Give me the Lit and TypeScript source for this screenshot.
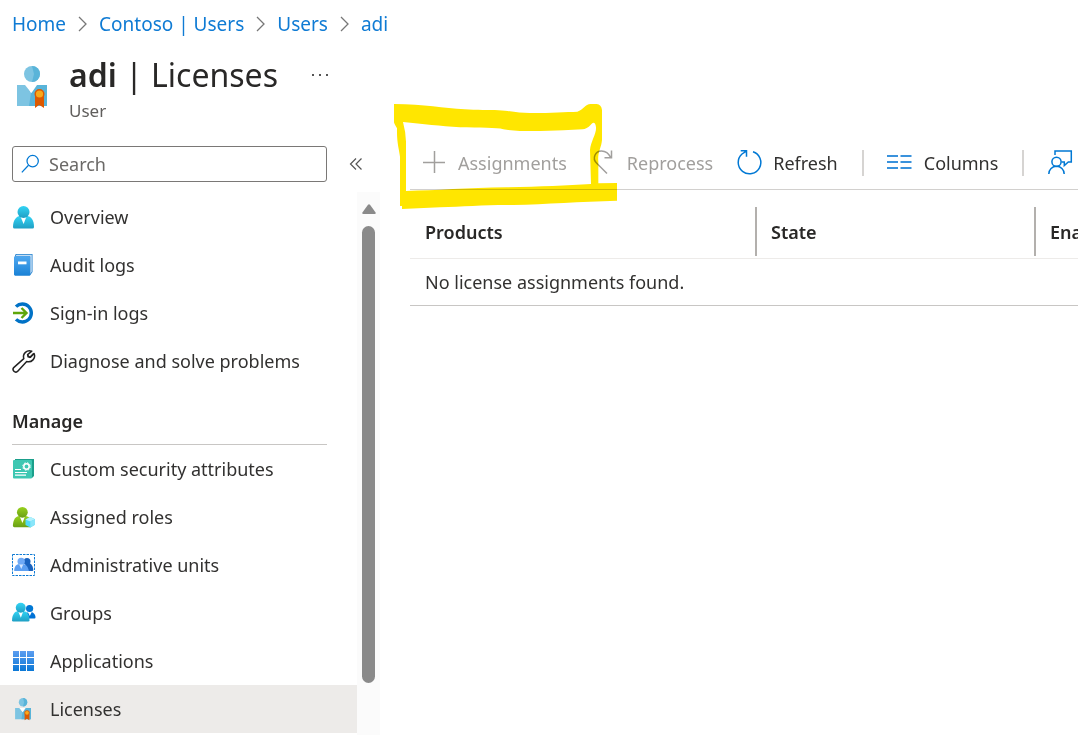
import { LitElement, html, svg, css, nothing, type TemplateResult } from "lit";
import { customElement, property } from "lit/decorators.js";
import { classMap } from "lit/directives/class-map.js";

const licenseBody = svg`
  <path d="M3 18h10l4 8 4-8h12v21H3z" fill="#7dc4e2"/>
  <path d="M17 26l4-8h12v21H15z" fill="#59b4d9"/>
  <path d="M11 18h12l-5.500 8z" fill="#fff"/>
  <circle cx="18" cy="7" r="8" fill="#7dc4e2"/>
  <path d="M18-1a8 8 0 0 1 0 16l2-8z" fill="#59b4d9"/>
  <path d="M21 29h9v12l-3-2-2-1-4 3z" fill="#dd5900"/>
  <circle cx="25.500" cy="27" r="5" fill="#dd5900"/>
  <circle cx="25.500" cy="27" r="3.600" fill="#f8a91b"/>`;

const person = (fill: string, shirt = "#fff") => svg`
  <path d="M1 22c0-7 3.500-11 7-11h7c4 0 7 4 7 11a1.500 1.500 0 0 1-1.500 1.500h-18A1.500 1.500 0 0 1 1 22z" fill=${fill}/>
  <path d="M8.500 11.500h6L11.600 19z" fill=${shirt}/>
  <circle cx="11.500" cy="7" r="6" fill=${fill}/>`;

const icons: Record<string, TemplateResult> = {
  overview: svg`
    <defs><linearGradient id="cyan" x1="0" y1="0" x2="0" y2="1"><stop offset="0" stop-color="#32d4f5"/><stop offset="1" stop-color="#1f9fc4"/></linearGradient></defs>
    ${person("url(#cyan)")}`,
  audit: svg`
    <defs><linearGradient id="book" x1="0" y1="0" x2="0" y2="1"><stop offset="0" stop-color="#50a8f0"/><stop offset="1" stop-color="#1a82d6"/></linearGradient></defs>
    <path d="M4 1h16.500v18L18 22.500H3V2z" fill="#1f7fcd"/>
    <path d="M4.500 1.800h15.300v17L18.200 21V3.200H3.200z" fill="#c5def4"/>
    <rect x="2" y="3.200" width="16.200" height="19.300" rx="1" fill="url(#book)"/>
    <rect x="6" y="8.500" width="8.500" height="2.800" fill="#fff"/>`,
  signin: svg`
    <path d="M4 5.600A9 9 0 1 1 4 18.400" fill="none" stroke="#0072c6" stroke-width="3.400"/>
    <path d="M1 12h13M9.500 7l5 5-5 5" fill="none" stroke="#5ea60a" stroke-width="2.400"/>`,
  wrench: svg`
    <path d="M19.800 2.200a6 6 0 0 0-8 7.400L1.700 18.600a2.700 2.700 0 0 0 3.800 3.800L14.700 12.500a6 6 0 0 0 7.400-8l-3.600 3.700-2.400-.4-.5-2.200z" fill="none" stroke="#222" stroke-width="1.500" stroke-linejoin="round"/>
    <path d="M16 6.500l1.600 1.900 4-4" fill="none" stroke="#222" stroke-width="1.300"/>`,
  attributes: svg`
    <path d="M3 2h19v17l-2 2H3z" fill="#1b9f8b"/>
    <rect x="1" y="3" width="19" height="18.500" rx="1" fill="#3ec7b2"/>
    <path d="M3 12.500h6M3 15.500h12M3 18.200h11" stroke="#fff" stroke-width="1.200"/>
    <circle cx="14.500" cy="9.500" r="2.700" fill="none" stroke="#fff" stroke-width="1.500"/>
    <circle cx="14.500" cy="9.500" r="3.800" fill="none" stroke="#fff" stroke-width="1" stroke-dasharray="1.500 1.500"/>`,
  roles: svg`
    <defs><linearGradient id="green" x1="0" y1="0" x2="0" y2="1"><stop offset="0" stop-color="#98d21d"/><stop offset="1" stop-color="#6a9f14"/></linearGradient></defs>
    <g transform="translate(0 1) scale(.9)">${person("url(#green)")}</g>
    <path d="M13.500 14.500l4.800-2.500 4.700 2.200v5.500l-4.700 2.800-4.800-2.500z" fill="#50d9f5"/>
    <path d="M13.500 14.500l4.800-2.500 4.700 2.200-4.700 2.400z" fill="#b4f1fd"/>
    <path d="M18.300 16.600l4.700-2.400v5.500l-4.700 2.800z" fill="#8ae5f9"/>`,
  units: svg`
    <rect x=".5" y="1.500" width="22" height="21" fill="none" stroke="#0f7bd4" stroke-dasharray="2.500 1"/>
    <path d="M12 18c0-6 1-7 4-8 4 0 5 4 5.300 7a1 1 0 0 1-1 1z" fill="#1a63bf"/>
    <circle cx="15" cy="8.500" r="3.500" fill="#1a63bf"/>
    <g transform="translate(1.500 4.500) scale(.67)"><path d="M1 20c0-6 3-10 7-10h7c4 0 7 5 8 10z" fill="#5c9ff2"/><circle cx="11.500" cy="6" r="5.500" fill="#6faaf6"/><path d="M8.500 10.500h6L11.600 17z" fill="#d3e6ff"/></g>`,
  groups: svg`
    <path d="M13 17.500c0-5 2-6.500 5-6.500s5.500 2 5.500 5.500a1 1 0 0 1-1 1z" fill="#0072d6"/>
    <circle cx="17.600" cy="7.500" r="3.600" fill="#0078d4"/>
    <path d="M15.800 11h4l-2 4z" fill="#fff"/>
    <g transform="translate(-.8 1) scale(.83)">${person("url(#cyan2)")}</g>
    <defs><linearGradient id="cyan2" x1="0" y1="0" x2="0" y2="1"><stop offset="0" stop-color="#32d4f5"/><stop offset="1" stop-color="#1f9fc4"/></linearGradient></defs>`,
  applications: svg`
    <defs><linearGradient id="tile" gradientUnits="userSpaceOnUse" x1="0" y1="2" x2="0" y2="22"><stop offset="0" stop-color="#5c9df0"/><stop offset="1" stop-color="#0b78d6"/></linearGradient></defs>
    <path d="M1 2h6v6H1zM8 2h6v6H8zM15 2h7v6h-7zM1 9h6v6H1zM8 9h6v6H8zM15 9h7v6h-7zM1 16h6v6H1zM8 16h6v6H8zM15 16h7v6h-7z" fill="url(#tile)"/>`,
  licenses: svg`<g transform="translate(1.500 1.500) scale(.53)">${licenseBody}</g>`,
  add: svg`<path d="M12.500 0v22M1 11.500h22" stroke="#a19f9d" stroke-width="1.500"/>`,
  reprocess: svg`<path d="M16 22.500L5.500 12A7 7 0 0 1 10.500 0C15 0 18 3 20 6.800M20.500-.5v7.300h-7" fill="none" stroke="#a19f9d" stroke-width="1.500"/>`,
  refresh: svg`<path d="M16 .7A11.300 11.300 0 1 1 5 3L9 .3M3.700-.2h5.800v6" fill="none" stroke="#0078d4" stroke-width="1.500"/>`,
  columns: svg`<path d="M-1 5h11M12.500 5h11M-1 11h11M12.500 11h11M-1 17h11M12.500 17h11" stroke="#3a92dc" stroke-width="2"/>`,
  feedback: svg`<path d="M7 4V0h16.300v11h-3l-4 3.500V11h-2.800M.8 23a7.700 7.700 0 0 1 15.400 0" fill="none" stroke="#0078d4" stroke-width="1.500"/><circle cx="8.500" cy="10.800" r="4.600" fill="none" stroke="#0078d4" stroke-width="1.500"/>`,
  search: svg`<path d="M1 22l8-8.500" stroke="#0078d4" stroke-width="1.500"/><circle cx="14" cy="8.500" r="6.800" fill="none" stroke="#0078d4" stroke-width="1.500"/>`,
};

@customElement("portal-icon")
class PortalIcon extends LitElement {
  @property() name = "";
  static styles = css`
    :host { display: block; flex: none; width: 24px; height: 24px; }
    svg { display: block; width: 100%; height: 100%; overflow: visible; }
  `;
  render() {
    return html`<svg viewBox="0 0 24 24" aria-hidden="true">${icons[this.name] ?? nothing}</svg>`;
  }
}

const general = [
  ["overview", "Overview"],
  ["audit", "Audit logs"],
  ["signin", "Sign-in logs"],
  ["wrench", "Diagnose and solve problems"],
];
const manage = [
  ["attributes", "Custom security attributes"],
  ["roles", "Assigned roles"],
  ["units", "Administrative units"],
  ["groups", "Groups"],
  ["applications", "Applications"],
  ["licenses", "Licenses"],
];
const crumbs = ["Home", "Contoso | Users", "Users", "adi"];

@customElement("app-root")
class AppRoot extends LitElement {
  static styles = css`
    * { box-sizing: border-box; }
    :host {
      display: flex; flex-direction: column; min-height: 100vh; overflow-x: clip;
      background: #fff; color: #323130;
      font: 18px/24px "Noto Sans", "Open Sans", sans-serif;
    }
    a { color: inherit; text-decoration: none; }
    button, input { font: inherit; color: inherit; }
    button { border: 0; background: none; padding: 0; }
    .crumbs { display: flex; list-style: none; margin: 0; padding: 12px; gap: 12px; font-size: 19px; color: #0f7bd4; }
    .crumbs li { display: flex; align-items: center; gap: 12px; }
    .chevron { display: block; width: 9px; height: 16px; }
    .title { display: flex; align-items: flex-start; gap: 17px; padding: 3px 12px 13px; }
    .avatar { display: block; width: 40px; height: 44px; margin-top: 15px; overflow: visible; }
    .name { display: flex; align-items: center; gap: 32px; }
    h1 { margin: 0; font-size: 32px; line-height: 48px; font-weight: 400; color: #292827; }
    h1 strong { font-weight: 600; }
    .kind { margin: 0; font-size: 17px; color: #605e5c; }
    .more { display: flex; gap: 5px; padding: 8px 2px; }
    .more i { width: 2px; height: 2px; background: #555; }
    .body { flex: 1; display: grid; grid-template-columns: 380px minmax(0, 1fr); }
    .side { display: flex; flex-direction: column; padding-top: 10px; }
    .find { display: flex; align-items: center; gap: 22px; padding-left: 12px; margin-bottom: 10px; }
    .box { display: flex; align-items: center; gap: 8px; width: 315px; height: 36px; padding: 0 8px; border: 1px solid #7a7876; border-radius: 3px; }
    .box portal-icon { width: 20px; height: 20px; }
    .box input { flex: 1; min-width: 0; height: 24px; padding: 0; border: 0; outline: 0; background: none; }
    .box input::placeholder { color: #6b6967; opacity: 1; }
    .fold svg { display: block; width: 14px; height: 14px; }
    .scroller { flex: 1; display: grid; grid-template-columns: minmax(0, 1fr) 23px; }
    nav { padding-top: 1px; }
    .list { list-style: none; margin: 0; padding: 0; }
    .item { display: flex; align-items: center; gap: 14px; height: 48px; padding-left: 12px; }
    .item.selected { background: #edebe9; }
    h2 { margin: 0 30px 0 12px; padding: 24px 0 11px; border-bottom: 1px solid #c8c6c4; font-size: 18px; line-height: 24px; font-weight: 600; color: #292827; }
    .bar { display: flex; flex-direction: column; align-items: center; gap: 12px; padding-top: 12px; background: #fbfbfb; }
    .bar svg { display: block; width: 14px; height: 10px; }
    .thumb { width: 13px; height: 457px; border-radius: 7px; background: #8a8a8a; }
    main { margin-left: 30px; min-width: 0; }
    .tools { display: flex; align-items: center; gap: 24px; height: 54px; padding-left: 12px; border-bottom: 1px solid #d2d0ce; white-space: nowrap; }
    .tool { flex: none; display: flex; align-items: center; gap: 12px; }
    .tool:disabled { color: #a19f9d; }
    .rule { flex: none; width: 2px; height: 26px; background: #d6d4d2; }
    .marked { flex: none; position: relative; }
    .marker { position: absolute; left: -28px; top: -47px; width: 224px; height: 106px; mix-blend-mode: multiply; pointer-events: none; }
    .grid { overflow: hidden; padding-top: 17px; }
    table { table-layout: fixed; width: 100%; min-width: 903px; border-collapse: separate; border-spacing: 0; text-align: left; }
    th { padding: 0 0 2px; border-bottom: 1px solid #edebe9; font-weight: 600; color: #292827; }
    th span { display: block; height: 49px; padding: 13px 14px 0; border-left: 2px solid #b3b0ad; }
    th:first-child span { padding-left: 15px; border-left: 0; }
    .products { width: 345px; }
    .state { width: 279px; }
    td { height: 47px; padding: 0 15px; border-bottom: 1px solid #c8c6c4; }
  `;

  private items(rows: string[][]) {
    return html`<ul class="list">
      ${rows.map(([icon, label]) => html`<li>
        <a href="#" class=${classMap({ item: true, selected: icon === "licenses" })} aria-current=${icon === "licenses" ? "page" : nothing}>
          <portal-icon name=${icon}></portal-icon>${label}</a></li>`)}
    </ul>`;
  }

  render() {
    return html`
      <ol class="crumbs" aria-label="Breadcrumb">
        ${crumbs.map((c, i) => html`<li>
          ${i ? html`<svg class="chevron" viewBox="0 0 9 16" aria-hidden="true"><path d="M1 1l7 7-7 7" fill="none" stroke="#777" stroke-width="1.300"/></svg>` : nothing}
          <a href="#">${c}</a></li>`)}
      </ol>
      <header class="title">
        <svg class="avatar" viewBox="-2 0 40 44" aria-hidden="true"><g transform="translate(0 1)">${licenseBody}</g></svg>
        <div>
          <div class="name">
            <h1><strong>adi</strong> | Licenses</h1>
            <button class="more" aria-label="More actions"><i></i><i></i><i></i></button>
          </div>
          <p class="kind">User</p>
        </div>
      </header>
      <div class="body">
        <div class="side">
          <div class="find">
            <label class="box"><portal-icon name="search"></portal-icon><input type="text" placeholder="Search" aria-label="Search" /></label>
            <button class="fold" aria-label="Collapse menu">
              <svg viewBox="0 0 14 14" aria-hidden="true"><path d="M7 1.500L1.500 7 7 12.500M12.500 1.500L7 7l5.500 5.500" fill="none" stroke="#555" stroke-width="1.200"/></svg>
            </button>
          </div>
          <div class="scroller">
            <nav aria-label="User menu">
              ${this.items(general)}
              <h2>Manage</h2>
              ${this.items(manage)}
            </nav>
            <div class="bar" aria-hidden="true">
              <svg viewBox="0 0 14 10"><path d="M6 .8q1-1.200 2 0l5.600 7.700q.6 1.500-1 1.500H1.400q-1.600 0-1-1.500z" fill="#8a8a8a"/></svg>
              <div class="thumb"></div>
            </div>
          </div>
        </div>
        <main>
          <div class="tools" role="toolbar" aria-label="License commands">
            <div class="marked">
              <button class="tool" disabled><portal-icon name="add"></portal-icon>Assignments</button>
              <svg class="marker" viewBox="42 42 672 318" aria-hidden="true">
                <path fill="#ffe600" fill-rule="evenodd" d="M42 42L75 43C160 47 210 57 280 59C320 60 350 59 375 62C410 67 430 70 460 69C510 69 560 66 592 65C610 60 615 42 632 42H650Q664 44 666 60V150C664 175 652 185 655 215V280L711 279V332C600 335 500 342 400 345C320 344 250 350 180 352L66 357V348H60V200C58 180 50 160 51 115Q42 100 42 97ZM69 96Q77 125 78 155V303C170 301 260 294 380 292C480 290 560 286 633 282L630 180C632 155 650 130 648 112Q646 96 638 99C630 105 625 116 608 118L550 121C500 122 430 127 370 118C350 112 300 114 240 112C180 108 130 102 69 96Z"/>
              </svg>
            </div>
            <button class="tool" disabled><portal-icon name="reprocess"></portal-icon>Reprocess</button>
            <button class="tool"><portal-icon name="refresh"></portal-icon>Refresh</button>
            <span class="rule"></span>
            <button class="tool"><portal-icon name="columns"></portal-icon>Columns</button>
            <span class="rule"></span>
            <button class="tool" aria-label="Feedback"><portal-icon name="feedback"></portal-icon></button>
          </div>
          <div class="grid">
            <table>
              <thead><tr>
                <th class="products"><span>Products</span></th>
                <th class="state"><span>State</span></th>
                <th><span>Enabled Services</span></th>
              </tr></thead>
              <tbody><tr><td colspan="3">No license assignments found.</td></tr></tbody>
            </table>
          </div>
        </main>
      </div>`;
  }
}
